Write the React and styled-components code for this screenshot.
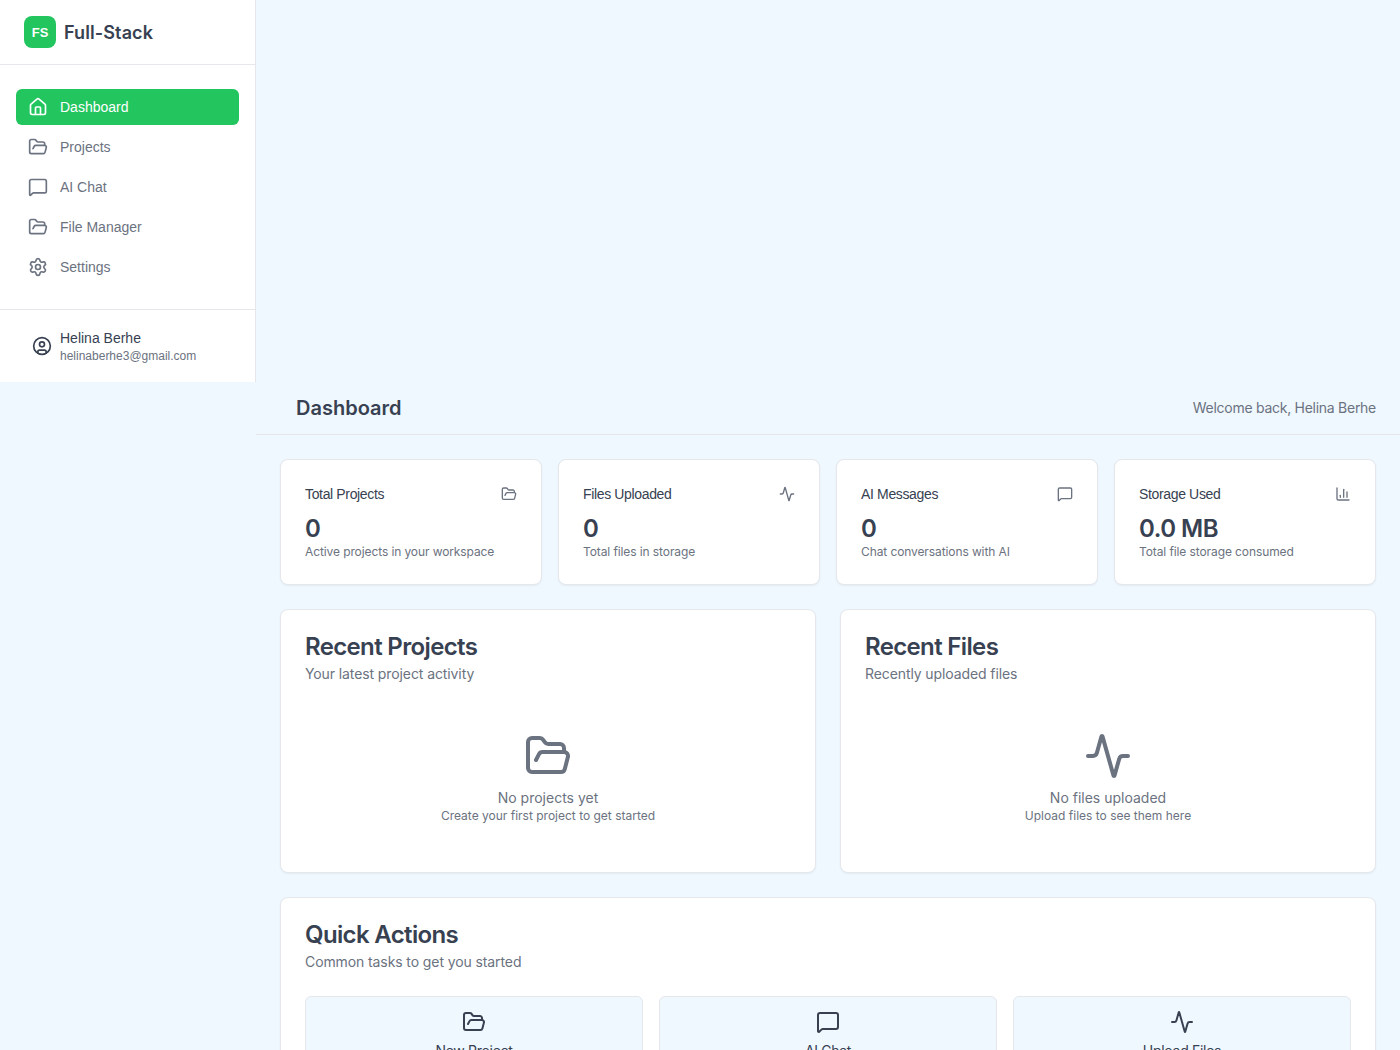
import React from "react";
import styled, { createGlobalStyle } from "styled-components";
import {
  Activity,
  ChartColumn,
  CircleUser,
  FolderOpen,
  House,
  MessageSquare,
  Settings,
} from "lucide-react";

const GlobalStyle = createGlobalStyle`
  * { box-sizing: border-box; }
  body {
    margin: 0;
    background: #f0f8ff;
    color: #374151;
    font-family: "Liberation Sans", Arial, sans-serif;
  }
`;

const display = `"Inter", "Noto Sans", sans-serif`;

const Sidebar = styled.aside`
  width: 256px;
  background: #fff;
  border-right: 1px solid #e5e7eb;
`;

const Brand = styled.div`
  height: 65px;
  padding: 0 24px;
  display: flex;
  align-items: center;
  gap: 8px;
  border-bottom: 1px solid #e5e7eb;
`;

const Logo = styled.div`
  width: 32px;
  height: 32px;
  border-radius: 8px;
  background: #22c55e;
  color: #fff;
  display: flex;
  align-items: center;
  justify-content: center;
  font-size: 13px;
  font-weight: 700;
`;

const BrandName = styled.span`
  font-family: ${display};
  font-size: 18px;
  font-weight: 600;
  letter-spacing: 0.1px;
  color: #374151;
`;

const Nav = styled.nav`
  padding: 24px 16px;
  display: flex;
  flex-direction: column;
  gap: 4px;
  border-bottom: 1px solid #e5e7eb;
`;

const NavItem = styled.a`
  height: 36px;
  padding: 0 12px;
  display: flex;
  align-items: center;
  gap: 12px;
  border-radius: 6px;
  font-size: 14px;
  background: ${(p) => (p.$active ? "#22c55e" : "transparent")};
  color: ${(p) => (p.$active ? "#fff" : "#6b7280")};
`;

const UserBox = styled.div`
  height: 72px;
  padding: 0 32px;
  display: flex;
  align-items: center;
  gap: 8px;
  color: #374151;

  svg {
    flex-shrink: 0;
  }
`;

const UserName = styled.div`
  font-size: 14px;
  line-height: 20px;
  color: #374151;
`;

const UserMail = styled.div`
  font-size: 12px;
  line-height: 16px;
  color: #6b7280;
`;

const Main = styled.main`
  margin-left: 256px;
`;

const Header = styled.header`
  height: 53px;
  padding: 0 24px 0 40px;
  display: flex;
  align-items: center;
  justify-content: space-between;
  border-bottom: 1px solid #e5e7eb;
`;

const PageTitle = styled.h1`
  margin: 0;
  font-family: ${display};
  font-size: 20px;
  font-weight: 600;
  color: #374151;
`;

const Welcome = styled.span`
  padding-bottom: 2px;
  font-family: ${display};
  font-size: 14px;
  letter-spacing: -0.27px;
  color: #6b7280;
`;

const Content = styled.div`
  padding: 24px;
  display: flex;
  flex-direction: column;
  gap: 24px;
`;

const Card = styled.section`
  background: #fff;
  border: 1px solid #e5e7eb;
  border-radius: 8px;
  box-shadow: 0 1px 2px rgba(0, 0, 0, 0.05);
`;

const StatsGrid = styled.div`
  display: grid;
  grid-template-columns: repeat(4, 1fr);
  gap: 16px;
`;

const StatCard = styled(Card)`
  height: 126px;
  padding: 24px;
`;

const StatTop = styled.div`
  height: 20px;
  margin-bottom: 8px;
  display: flex;
  align-items: center;
  justify-content: space-between;
  font-size: 14px;
  letter-spacing: -0.35px;
  color: #374151;

  svg {
    color: #6b7280;
  }
`;

const StatValue = styled.div`
  padding-top: 1px;
  font-family: ${display};
  font-size: 24px;
  line-height: 31px;
  font-weight: 600;
  letter-spacing: -0.5px;
  color: #374151;
`;

const StatNote = styled.div`
  font-family: ${display};
  font-size: 12px;
  line-height: 16px;
  letter-spacing: -0.1px;
  color: #6b7280;
`;

const TwoCols = styled.div`
  display: grid;
  grid-template-columns: repeat(2, 1fr);
  gap: 24px;
`;

const PanelHead = styled.div`
  padding: 25px 24px 0;
`;

const PanelTitle = styled.h2`
  margin: 0 0 5px;
  font-family: ${display};
  font-size: 24px;
  line-height: 23px;
  font-weight: 600;
  letter-spacing: -0.65px;
  color: #374151;
  padding-bottom: 1px;
`;

const PanelSub = styled.p`
  margin: 0;
  font-family: ${display};
  font-size: 14px;
  line-height: 20px;
  letter-spacing: -0.1px;
  color: #6b7280;
`;

const Panel = styled(Card)`
  height: 264px;
`;

const Empty = styled.div`
  padding-top: 48px;
  display: flex;
  flex-direction: column;
  align-items: center;
  text-align: center;
  color: #6b7280;

  svg {
    margin-bottom: 8px;
  }
`;

const EmptyTitle = styled.div`
  font-family: ${display};
  font-size: 14px;
  line-height: 20px;
`;

const EmptyNote = styled.div`
  font-family: ${display};
  font-size: 12px;
  line-height: 16px;
`;

const Actions = styled.div`
  padding: 24px;
  display: grid;
  grid-template-columns: repeat(3, 1fr);
  gap: 16px;
`;

const ActionButton = styled.button`
  height: 88px;
  padding: 13px 12px;
  display: flex;
  flex-direction: column;
  align-items: center;
  gap: 8px;
  background: #f0f8ff;
  border: 1px solid #e5e7eb;
  border-radius: 6px;
  color: #374151;
  font-family: ${display};
  font-size: 14px;
  letter-spacing: -0.3px;
`;

const navItems = [
  { label: "Dashboard", icon: House, active: true },
  { label: "Projects", icon: FolderOpen },
  { label: "AI Chat", icon: MessageSquare },
  { label: "File Manager", icon: FolderOpen },
  { label: "Settings", icon: Settings },
];

const stats = [
  { title: "Total Projects", icon: FolderOpen, value: "0", note: "Active projects in your workspace" },
  { title: "Files Uploaded", icon: Activity, value: "0", note: "Total files in storage" },
  { title: "AI Messages", icon: MessageSquare, value: "0", note: "Chat conversations with AI" },
  { title: "Storage Used", icon: ChartColumn, value: "0.0 MB", note: "Total file storage consumed" },
];

const App = () => (
  <>
    <GlobalStyle />
    <Sidebar>
      <Brand>
        <Logo>FS</Logo>
        <BrandName>Full-Stack</BrandName>
      </Brand>
      <Nav>
        {navItems.map(({ label, icon: Icon, active }) => (
          <NavItem key={label} $active={active}>
            <Icon size={20} />
            {label}
          </NavItem>
        ))}
      </Nav>
      <UserBox>
        <CircleUser size={20} />
        <div>
          <UserName>Helina Berhe</UserName>
          <UserMail>helinaberhe3@gmail.com</UserMail>
        </div>
      </UserBox>
    </Sidebar>
    <Main>
      <Header>
        <PageTitle>Dashboard</PageTitle>
        <Welcome>Welcome back, Helina Berhe</Welcome>
      </Header>
      <Content>
        <StatsGrid>
          {stats.map(({ title, icon: Icon, value, note }) => (
            <StatCard key={title}>
              <StatTop>
                {title}
                <Icon size={16} />
              </StatTop>
              <StatValue>{value}</StatValue>
              <StatNote>{note}</StatNote>
            </StatCard>
          ))}
        </StatsGrid>
        <TwoCols>
          <Panel>
            <PanelHead>
              <PanelTitle>Recent Projects</PanelTitle>
              <PanelSub>Your latest project activity</PanelSub>
            </PanelHead>
            <Empty>
              <FolderOpen size={48} />
              <EmptyTitle>No projects yet</EmptyTitle>
              <EmptyNote>Create your first project to get started</EmptyNote>
            </Empty>
          </Panel>
          <Panel>
            <PanelHead>
              <PanelTitle>Recent Files</PanelTitle>
              <PanelSub>Recently uploaded files</PanelSub>
            </PanelHead>
            <Empty>
              <Activity size={48} />
              <EmptyTitle>No files uploaded</EmptyTitle>
              <EmptyNote>Upload files to see them here</EmptyNote>
            </Empty>
          </Panel>
        </TwoCols>
        <Card>
          <PanelHead>
            <PanelTitle>Quick Actions</PanelTitle>
            <PanelSub>Common tasks to get you started</PanelSub>
          </PanelHead>
          <Actions>
            <ActionButton>
              <FolderOpen size={24} />
              New Project
            </ActionButton>
            <ActionButton>
              <MessageSquare size={24} />
              AI Chat
            </ActionButton>
            <ActionButton>
              <Activity size={24} />
              Upload Files
            </ActionButton>
          </Actions>
        </Card>
      </Content>
    </Main>
  </>
);

export default App;
